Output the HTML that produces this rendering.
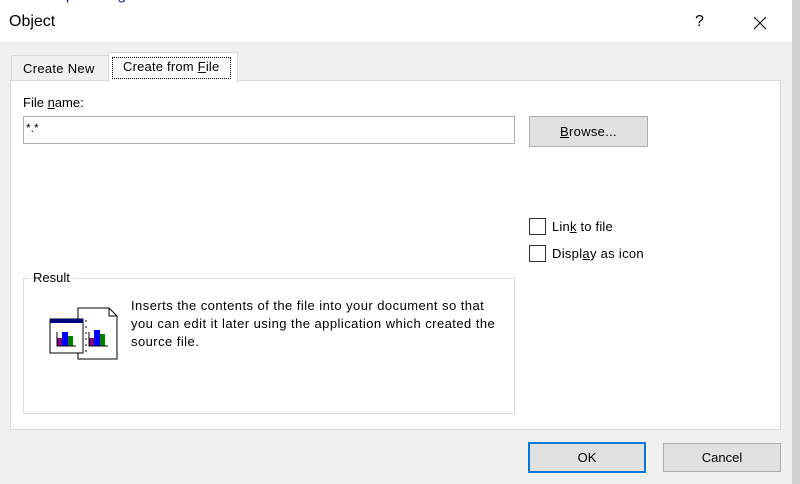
<!DOCTYPE html>
<html><head><style>
body{margin:0;width:800px;height:484px;overflow:hidden;background:#fff;font-family:"Segoe UI","Liberation Sans","DejaVu Sans",sans-serif;font-size:13px;color:#000;position:relative}
.a{position:absolute}
u{text-decoration:underline}
</style></head><body>
<div class="a" style="left:0;top:0;width:800px;height:4px;background:#fff;overflow:hidden"><div style="position:absolute;left:48px;top:-14px;color:#1a1aa6;font-size:16px;">https://blogs.msdn.microsoft.com/office/2018/03/...</div></div>
<div class="a" style="left:792px;top:0;width:8px;height:484px;background:#cfcfcf"></div>
<div class="a" style="left:0;top:4px;width:792px;height:480px;background:#f0f0f0"></div>
<div class="a" style="left:0;top:4px;width:792px;height:38px;background:#fff"></div>
<div class="a" style="left:9px;top:13px;font-size:16px">Object</div>
<div class="a" style="left:695px;top:13px;font-size:16px">?</div>
<svg class="a" style="left:753px;top:16px" width="14" height="14"><path d="M1 1L13 13M13 1L1 13" stroke="#000" stroke-width="1"/></svg>
<div class="a" style="left:11px;top:55px;width:100px;height:25px;border:1px solid #d9d9d9;border-bottom:none;background:#f0f0f0"></div>
<div class="a" style="left:23px;top:61px;letter-spacing:0.3px">Create New</div>
<div class="a" style="left:10px;top:80px;width:769px;height:348px;background:#fff;border:1px solid #d9d9d9"></div>
<div class="a" style="left:108px;top:52px;width:128px;height:30px;background:#fff;border:1px solid #d9d9d9;border-bottom:none"></div>
<div class="a" style="left:112px;top:57px;width:117px;height:20px;border:1px dotted #000"></div>
<div class="a" style="left:123px;top:59px;letter-spacing:0.2px">Create from <u>F</u>ile</div>
<div class="a" style="left:23px;top:95px">File <u>n</u>ame:</div>
<div class="a" style="left:23px;top:116px;width:490px;height:26px;border:1px solid #adadad;background:#fff"></div>
<div class="a" style="left:26px;top:121px;font-size:12px">*.*</div>
<div class="a" style="left:529px;top:116px;width:117px;height:29px;border:1px solid #adadad;background:#e1e1e1;text-align:center;line-height:29px;letter-spacing:0.3px"><u>B</u>rowse...</div>
<div class="a" style="left:529px;top:218px;width:15px;height:15px;border:1px solid #333;background:#fff"></div>
<div class="a" style="left:552px;top:219px;letter-spacing:0.2px">Lin<u>k</u> to file</div>
<div class="a" style="left:529px;top:245px;width:15px;height:15px;border:1px solid #333;background:#fff"></div>
<div class="a" style="left:552px;top:246px;letter-spacing:0.3px">Displ<u>a</u>y as icon</div>
<div class="a" style="left:23px;top:278px;width:490px;height:134px;border:1px solid #dcdcdc"></div>
<div class="a" style="left:30px;top:270px;background:#fff;padding:0 3px">Result</div>
<div class="a" style="left:131px;top:297px;line-height:18px;letter-spacing:0.45px">Inserts the contents of the file into your document so that<br>you can edit it later using the application which created the<br>source file.</div>
<svg class="a" style="left:48px;top:305px" width="72" height="58">
<path d="M30 3H61L69 11V54H30Z" fill="#fff" stroke="#000"/><path d="M61 3V11H69" fill="none" stroke="#000"/>
<rect x="2" y="14" width="33" height="34" fill="#fff" stroke="#000"/><rect x="2" y="14" width="33" height="4" fill="#000080"/>
<rect x="9" y="33" width="5" height="8" fill="#800080"/><rect x="14" y="27" width="6" height="14" fill="#0000ff"/><rect x="20" y="31" width="5" height="10" fill="#008000"/><path d="M9 27V41H28" fill="none" stroke="#000"/>
<rect x="41" y="33" width="5" height="8" fill="#800080"/><rect x="46" y="25" width="6" height="16" fill="#0000ff"/><rect x="52" y="29" width="5" height="12" fill="#008000"/><path d="M41 27V41H60" fill="none" stroke="#000"/>
<path d="M38 15V50" stroke="#000" stroke-dasharray="2 4"/>
</svg>
<div class="a" style="left:528px;top:442px;width:114px;height:27px;border:2px solid #0078d7;background:#e1e1e1;text-align:center;line-height:27px">OK</div>
<div class="a" style="left:663px;top:443px;width:116px;height:27px;border:1px solid #adadad;background:#e1e1e1;text-align:center;line-height:27px">Cancel</div>
</body></html>
